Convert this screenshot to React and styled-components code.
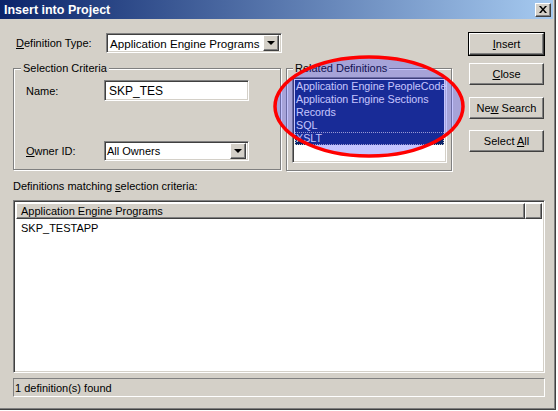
import React from 'react';
import styled, { createGlobalStyle } from 'styled-components';

const Global = createGlobalStyle`
  html, body { margin: 0; padding: 0; background: #ffffff; }
  body { font-family: "Liberation Sans", Arial, sans-serif; font-size: 11px; color: #000; }
  * { box-sizing: border-box; }
`;

const Window = styled.div`
  position: relative;
  width: 556px;
  height: 410px;
  background: #d4d0c8;
  border-right: 1px solid #404040;
  border-bottom: 1px solid #404040;
  box-shadow: inset -1px -1px 0 #808080;
  display: flex;
  flex-direction: column;
`;

const TitleBar = styled.div`
  height: 19px;
  margin-right: 2px;
  background: linear-gradient(to right, #0a246a, #a6caf0);
  display: flex;
  align-items: center;
  justify-content: space-between;
  padding: 0 2px 0 4px;
`;

const TitleText = styled.span`
  color: #ffffff;
  font-weight: bold;
  font-size: 12.5px;
  font-family: "Liberation Sans", Arial, sans-serif;
`;

const raised = `
  background: #d4d0c8;
  border-top: 1px solid #ffffff;
  border-left: 1px solid #ffffff;
  border-right: 1px solid #404040;
  border-bottom: 1px solid #404040;
  box-shadow: inset -1px -1px 0 #808080;
`;

const sunken = `
  border-top: 1px solid #808080;
  border-left: 1px solid #808080;
  border-right: 1px solid #ffffff;
  border-bottom: 1px solid #ffffff;
  box-shadow: inset 1px 1px 0 #404040, inset -1px -1px 0 #d4d0c8;
`;

const CaptionButton = styled.div`
  ${raised}
  width: 16px;
  height: 14px;
  display: flex;
  align-items: center;
  justify-content: center;
`;

const Body = styled.div`
  flex: 1;
  display: flex;
  flex-direction: column;
  padding: 14px 10px 0 13px;
`;

const Upper = styled.div`
  display: flex;
  align-items: flex-start;
`;

const LeftCol = styled.div`
  width: 441px;
  display: flex;
  flex-direction: column;
`;

const DefRow = styled.div`
  display: flex;
  align-items: center;
  height: 20px;
`;

const Label = styled.span`
  width: ${p => p.$w || 'auto'}px;
  padding-left: ${p => p.$pl || 0}px;
  white-space: nowrap;
`;

const Combo = styled.div`
  ${sunken}
  width: ${p => p.$w}px;
  height: ${p => p.$h || 20}px;
  background: #ffffff;
  display: flex;
  align-items: center;
  justify-content: space-between;
  padding: 2px 2px 2px ${p => p.$pl || 4}px;
  font-size: ${p => p.$fs || 11}px;
`;

const DropButton = styled.div`
  ${raised}
  width: 16px;
  height: 16px;
  display: flex;
  align-items: center;
  justify-content: center;
`;

const Arrow = styled.span`
  width: 0;
  height: 0;
  border-left: 4px solid transparent;
  border-right: 4px solid transparent;
  border-top: 4px solid #000;
`;

const GroupRow = styled.div`
  display: flex;
  gap: 5px;
  margin-top: 9px;
`;

const Group = styled.fieldset`
  margin: 0;
  padding: 0;
  width: ${p => p.$w}px;
  height: ${p => p.$h}px;
  border: 1px solid #808080;
  box-shadow: inset 1px 1px 0 #ffffff, 1px 1px 0 #ffffff;
  min-width: 0;
`;

const Legend = styled.legend`
  margin-left: ${p => p.$ml || 7}px;
  padding: 0 2px;
  line-height: 13px;
  background: #d4d0c8;
`;

const CriteriaGrid = styled.div`
  display: grid;
  grid-template-columns: 78px 145px;
  grid-template-rows: 21px 21px;
  row-gap: 39px;
  align-items: center;
  padding: 5px 0 0 12px;
`;

const TextInput = styled.div`
  ${sunken}
  height: 21px;
  background: #ffffff;
  padding: 0 4px;
  display: flex;
  align-items: center;
  font-size: 12px;
`;

const ListBox = styled.div`
  ${sunken}
  width: 155px;
  height: 86px;
  margin: 2px 0 0 5px;
  background: #ffffff;
  padding: 2px;
  overflow: hidden;
`;

const ListItem = styled.div`
  line-height: 13px;
  height: 13px;
  padding-left: 1px;
  font-size: 10.7px;
  white-space: nowrap;
  background: ${p => (p.$selected ? '#0a246a' : 'transparent')};
  color: ${p => (p.$selected ? '#ffffff' : '#000')};
  outline: ${p => (p.$focus ? '1px dotted #c0c0c0' : 'none')};
  outline-offset: -1px;
`;

const ButtonCol = styled.div`
  display: flex;
  flex-direction: column;
  margin-left: 15px;
`;

const Button = styled.div`
  ${raised}
  width: 75px;
  height: 22px;
  margin-top: ${p => p.$mt || 0}px;
  display: flex;
  align-items: center;
  justify-content: center;
  white-space: pre;
  ${p => p.$default && `
    outline: 1px solid #000;
    outline-offset: 0;
  `}
`;

const Caption = styled.div`
  margin-top: 9px;
  line-height: 13px;
  height: 13px;
`;

const ListView = styled.div`
  ${sunken}
  margin-top: 7px;
  width: 532px;
  height: 173px;
  background: #ffffff;
  padding: 2px;
  display: flex;
  flex-direction: column;
`;

const HeaderRow = styled.div`
  display: flex;
  height: 16px;
`;

const HeaderCell = styled.div`
  ${raised}
  width: ${p => p.$w}px;
  flex: ${p => (p.$grow ? 1 : 'none')};
  padding-left: 4px;
  display: flex;
  align-items: center;
  white-space: nowrap;
`;

const Row = styled.div`
  height: 14px;
  line-height: 14px;
  padding-left: 5px;
  margin-top: 2px;
`;

const StatusBar = styled.div`
  margin-top: 5px;
  width: 532px;
  height: 19px;
  border-top: 1px solid #808080;
  border-left: 1px solid #808080;
  border-right: 1px solid #ffffff;
  border-bottom: 1px solid #ffffff;
  padding-left: 1px;
  display: flex;
  align-items: center;
`;

const Highlight = styled.svg`
  position: absolute;
  left: 0;
  top: 0;
  pointer-events: none;
`;

const related = [
  'Application Engine PeopleCode',
  'Application Engine Sections',
  'Records',
  'SQL',
  'XSLT',
];

export default function App() {
  return (
    <>
      <Global />
      <Window>
        <TitleBar>
          <TitleText>Insert into Project</TitleText>
          <CaptionButton>
            <svg width="8" height="7" viewBox="0 0 8 7">
              <path d="M0 0h2l2 2.5L6 0h2L5 3.5 8 7H6L4 4.5 2 7H0l3-3.5z" fill="#000" />
            </svg>
          </CaptionButton>
        </TitleBar>
        <Body>
          <Upper>
            <LeftCol>
              <DefRow>
                <Label $w={93} $pl={3}><u>D</u>efinition Type:</Label>
                <Combo $w={176} $fs={11.6} $pl={3}>
                  <span>Application Engine Programs</span>
                  <DropButton><Arrow /></DropButton>
                </Combo>
              </DefRow>
              <GroupRow>
                <Group $w={268} $h={108}>
                  <Legend>Selection Criteria</Legend>
                  <CriteriaGrid>
                    <Label>Name:</Label>
                    <TextInput>SKP_TES</TextInput>
                    <Label><u>O</u>wner ID:</Label>
                    <Combo $w={145} $pl={2}>
                      <span>All Owners</span>
                      <DropButton><Arrow /></DropButton>
                    </Combo>
                  </CriteriaGrid>
                </Group>
                <Group $w={166} $h={109}>
                  <Legend $ml={6}>Related Definitions</Legend>
                  <ListBox>
                    {related.map((name, i) => (
                      <ListItem key={name} $selected $focus={i === related.length - 1}>
                        {name}
                      </ListItem>
                    ))}
                  </ListBox>
                </Group>
              </GroupRow>
            </LeftCol>
            <ButtonCol>
              <Button $default><span><u>I</u>nsert</span></Button>
              <Button $mt={8}><span><u>C</u>lose</span></Button>
              <Button $mt={12}><span>Ne<u>w</u> Search</span></Button>
              <Button $mt={11}><span>Select <u>A</u>ll</span></Button>
            </ButtonCol>
          </Upper>
          <Caption>Definitions matching <u>s</u>election criteria:</Caption>
          <ListView>
            <HeaderRow>
              <HeaderCell $w={509}>Application Engine Programs</HeaderCell>
              <HeaderCell $grow />
            </HeaderRow>
            <Row>SKP_TESTAPP</Row>
          </ListView>
          <StatusBar>1 definition(s) found</StatusBar>
        </Body>
        <Highlight width="556" height="410" viewBox="0 0 556 410">
          <ellipse
            cx="369"
            cy="106.5"
            rx="94"
            ry="49.5"
            fill="rgba(60,60,255,0.3)"
            stroke="#ff0000"
            strokeWidth="3.5"
          />
        </Highlight>
      </Window>
    </>
  );
}
